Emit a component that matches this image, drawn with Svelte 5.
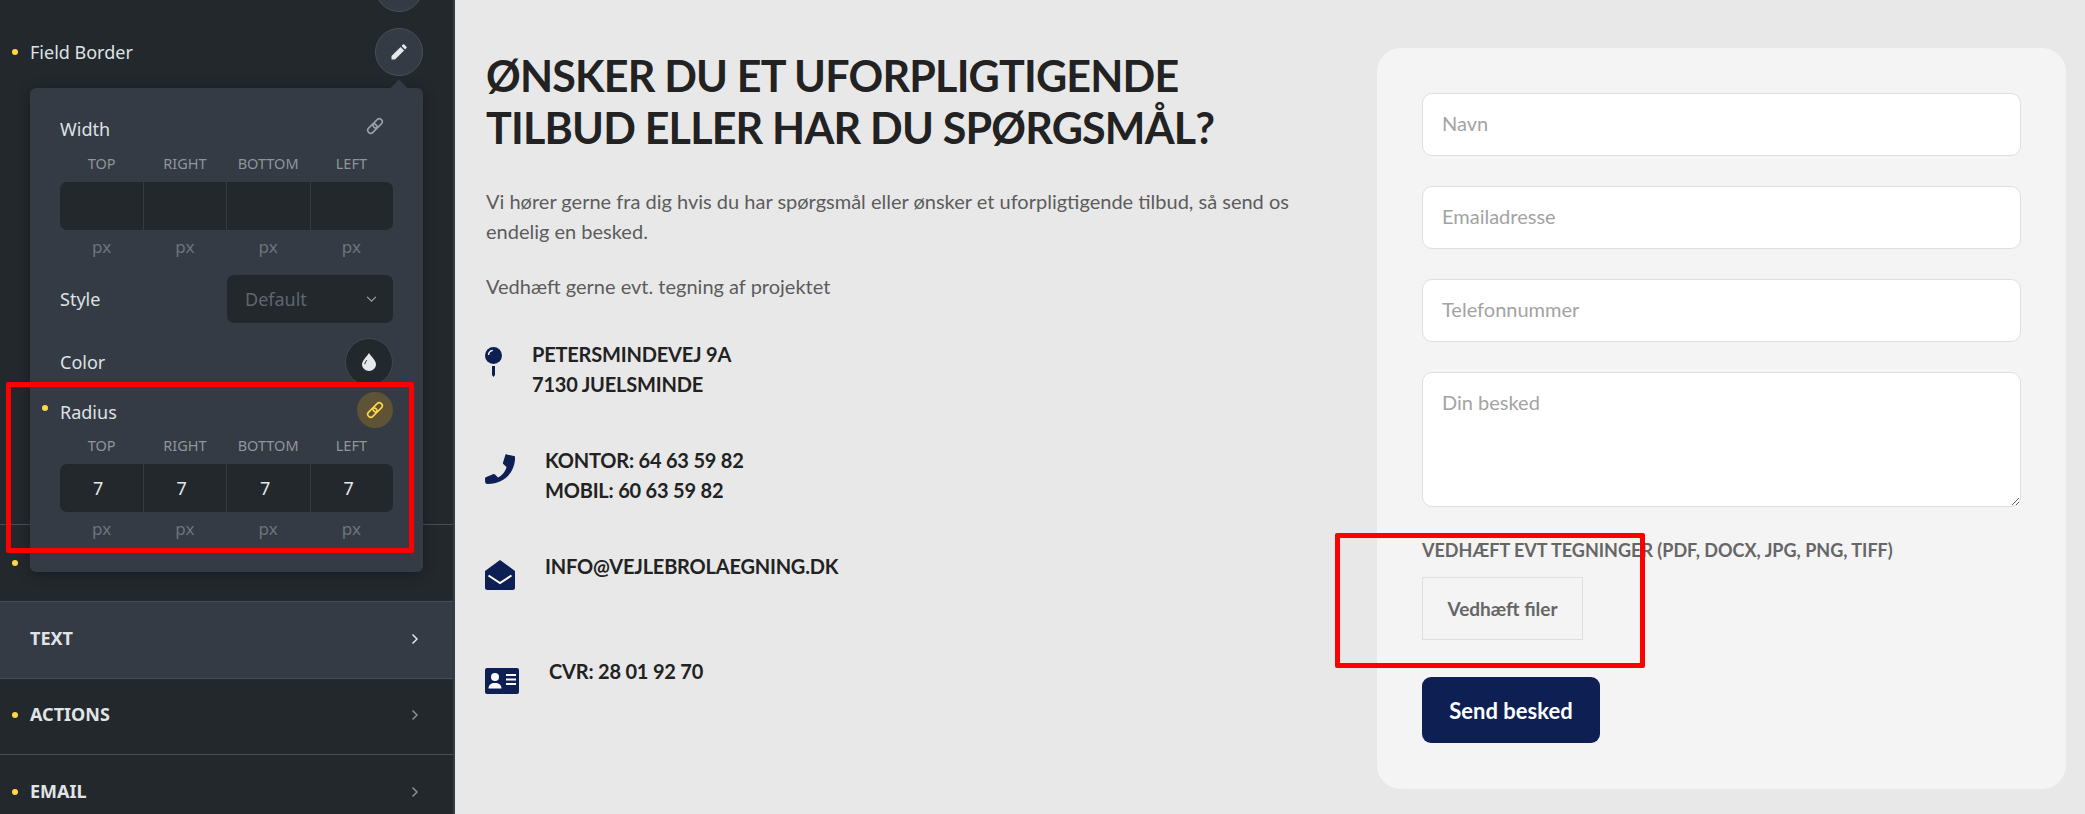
<script>
	const sides = ['TOP', 'RIGHT', 'BOTTOM', 'LEFT']
	const sections = [
		{ name: 'TEXT', active: true },
		{ name: 'ACTIONS', dot: true },
		{ name: 'EMAIL', dot: true }
	]
</script>

{#snippet link()}
	<svg class="link" viewBox="0 0 18 18" width="18" height="18" fill="none" stroke="currentColor" stroke-width="1.6">
		<g transform="rotate(-45 9 9)">
			<rect x="0" y="6" width="10.5" height="6" rx="3" />
			<rect x="7.5" y="6" width="10.5" height="6" rx="3" />
		</g>
	</svg>
{/snippet}

{#snippet sideValues(value)}
	<div class="side-labels">
		{#each sides as side}<span>{side}</span>{/each}
	</div>
	<div class="side-inputs">
		{#each sides as side}<div class="side-input">{value}</div>{/each}
	</div>
	<div class="side-units">
		{#each sides as side}<span>px</span>{/each}
	</div>
{/snippet}

{#snippet chevron()}
	<svg class="chevron" viewBox="0 0 8 12" width="8" height="12" fill="none" stroke="currentColor" stroke-width="1.5">
		<path d="M1.5 1.5 6 6l-4.5 4.5" />
	</svg>
{/snippet}

<div class="page">
	<aside class="sidebar">
		<div class="field-group">
			<div class="round-btn clipped"></div>
			<div class="field-row">
				<span class="dot"></span>
				<span class="field-name">Field Border</span>
				<div class="round-btn">
					<svg viewBox="0 0 16 16" width="16" height="16" fill="#e6e8ea">
						<path d="M0.5 15.5V12L9.6 2.9l3.5 3.5L4 15.5zM10.6 1.9 11.9.6a1 1 0 0 1 1.4 0l2.1 2.1a1 1 0 0 1 0 1.4l-1.3 1.3z" />
					</svg>
				</div>
			</div>
		</div>
		<div class="hidden-row"><span class="dot"></span></div>
		{#each sections as section}
			<div class="section" class:active={section.active}>
				{#if section.dot}<span class="dot"></span>{/if}
				<span>{section.name}</span>
				{@render chevron()}
			</div>
		{/each}
	</aside>

	<main class="main">
		<section class="info">
			<h1>ØNSKER DU ET UFORPLIGTIGENDE<br />TILBUD ELLER HAR DU SPØRGSMÅL?</h1>
			<p class="lead">Vi hører gerne fra dig hvis du har spørgsmål eller ønsker et uforpligtigende tilbud, så send os endelig en besked.</p>
			<p class="lead second">Vedhæft gerne evt. tegning af projektet</p>

			<div class="contact">
				<div class="contact-row">
					<svg class="pin" viewBox="0 0 17 30" width="17" height="30">
						<circle cx="8.5" cy="8.5" r="8.5" fill="#0e1f53" />
						<path d="M3.5 8C3.7 5.6 5.4 3.8 7.8 3.4" fill="none" stroke="#fff" stroke-width="1.4" />
						<path d="M7 19h3v9l-1.5 2L7 28z" fill="#0e1f53" />
					</svg>
					<div>PETERSMINDEVEJ 9A<br />7130 JUELSMINDE</div>
				</div>
				<div class="contact-row">
					<svg class="icon" viewBox="0 0 30 30" width="30" height="30">
						<path fill="#0e1f53" d="M21.5 0.5 29 2c1 .2 1.2 1 1.1 2C29.6 18 20 29.700 2.500 30 1 30 .4 29.200 .2 28L0 25c0-1 .4-1.600 1.300-2L8 20.200c.9-.4 1.500-.2 2 .4l3 2.900c4-1.800 7.500-6 8.500-10.500l-3-2.700c-.6-.5-.7-1.200-.4-2l2.100-6.800c.3-1 .900-1.600 1.800-1.400z" />
					</svg>
					<div>KONTOR: 64 63 59 82<br />MOBIL: 60 63 59 82</div>
				</div>
				<div class="contact-row">
					<svg class="icon" viewBox="0 0 30 30" width="30" height="30">
						<path fill="#0e1f53" d="M15 0 30 11v16.500a2.500 2.500 0 0 1-2.500 2.500h-25A2.500 2.500 0 0 1 0 27.500V11z" />
						<path d="M3.500 15.500 15 23l11.500-7.500" fill="none" stroke="#fff" stroke-width="2" />
					</svg>
					<div>INFO@VEJLEBROLAEGNING.DK</div>
				</div>
				<div class="contact-row">
					<svg class="icon card" viewBox="0 0 34 26" width="34" height="26">
						<rect width="34" height="26" rx="2" fill="#0e1f53" />
						<circle cx="10" cy="9" r="4" fill="#fff" />
						<path d="M3.500 20.500c0-3.500 2.500-5.500 6.500-5.500s6.500 2 6.500 5.500z" fill="#fff" />
						<path d="M21 7h10M21 11.500h10M21 16h10" stroke="#fff" stroke-width="1.800" />
					</svg>
					<div class="cvr">CVR: 28 01 92 70</div>
				</div>
			</div>
		</section>

		<form class="form" onsubmit={(e) => e.preventDefault()}>
			<input type="text" placeholder="Navn" />
			<input type="text" placeholder="Emailadresse" />
			<input type="text" placeholder="Telefonnummer" />
			<textarea placeholder="Din besked"></textarea>
			<div class="attach-label">VEDHÆFT EVT TEGNINGER (PDF, DOCX, JPG, PNG, TIFF)</div>
			<button type="button" class="attach">Vedhæft filer</button>
			<button type="submit" class="send">Send besked</button>
		</form>
	</main>

	<div class="popover">
		<div class="pop-head">
			<span class="width-label">Width</span>
			<span class="link-plain">{@render link()}</span>
		</div>
		{@render sideValues('')}

		<div class="pop-row style-row">
			<span>Style</span>
			<div class="select">
				<span>Default</span>
				<svg viewBox="0 0 12 8" width="11" height="7" fill="none" stroke="#9aa0a6" stroke-width="1.400"><path d="M1 1l5 5 5-5" /></svg>
			</div>
		</div>

		<div class="pop-row color-row">
			<span>Color</span>
			<div class="round-btn dark">
				<svg viewBox="0 0 14 18" width="14" height="18">
					<path d="M7 0C9 3.500 14 7.500 14 11.500A7 6.500 0 0 1 0 11.500C0 7.500 5 3.500 7 0z" fill="#e6e8ea" />
					<path d="M2.800 11.200C3 9.500 4 8 5 7" fill="none" stroke="#23282d" stroke-width="1" />
				</svg>
			</div>
		</div>

		<div class="pop-head radius-head">
			<span class="dot"></span>
			<span>Radius</span>
			<span class="link-active">{@render link()}</span>
		</div>
		{@render sideValues('7')}
	</div>

	<div class="mark mark-radius"></div>
	<div class="mark mark-files"></div>
</div>

<style>
	:global(body) {
		margin: 0;
		background: #e8e8e8;
	}

	.page {
		position: relative;
		display: flex;
		height: 814px;
		overflow: hidden;
		font-family: "Lato", sans-serif;
	}

	/* sidebar */
	.sidebar {
		flex: 0 0 455px;
		box-sizing: border-box;
		height: 814px;
		background: #23282d;
		border-right: 2px solid #343b44;
		color: #e6e8ea;
		font-family: "Noto Sans", sans-serif;
	}

	.field-group {
		height: 524px;
		box-sizing: border-box;
		padding-top: 1px;
	}

	.round-btn {
		display: flex;
		align-items: center;
		justify-content: center;
		box-sizing: border-box;
		width: 48px;
		height: 48px;
		border-radius: 50%;
		background: #343b44;
		border: 1px solid #47505a;
	}

	.clipped {
		margin: -37px 30px 0 auto;
	}

	.field-row {
		display: flex;
		align-items: center;
		position: relative;
		margin-top: 16px;
		padding: 0 30px;
		height: 48px;
		font-size: 18px;
	}

	.field-name {
		flex: 1;
		color: #dfe2e5;
	}

	.dot {
		position: absolute;
		left: 12px;
		width: 6px;
		height: 6px;
		border-radius: 50%;
		background: #ffd54a;
	}

	.hidden-row {
		position: relative;
		display: flex;
		align-items: center;
		box-sizing: border-box;
		height: 77px;
		border-top: 1px solid #464e58;
	}

	.section {
		position: relative;
		display: flex;
		align-items: center;
		justify-content: space-between;
		box-sizing: border-box;
		height: 76.5px;
		padding: 0 34px 2px 30px;
		border-top: 1px solid #464e58;
		font-size: 18px;
		font-weight: 700;
		color: #e1e4e7;
	}

	.section > span:not(.dot) {
		margin-top: -2px;
	}

	.section.active {
		background: #343b44;
	}

	.section:not(.active) .chevron {
		color: #868d94;
	}

	/* popover over the sidebar */
	.popover {
		position: absolute;
		left: 30px;
		top: 88px;
		box-sizing: border-box;
		width: 393px;
		height: 484px;
		padding: 26px 30px 0;
		background: #343b44;
		border-radius: 6px;
		box-shadow: 0 2px 14px rgba(0, 0, 0, 0.3);
		color: #dfe2e5;
		font-family: "Noto Sans", sans-serif;
		font-size: 18px;
	}

	.popover::before {
		content: "";
		position: absolute;
		right: 18px;
		top: -6px;
		width: 12px;
		height: 12px;
		background: #343b44;
		transform: rotate(45deg);
	}

	.pop-head,
	.pop-row {
		display: flex;
		align-items: center;
		justify-content: space-between;
		position: relative;
	}

	.pop-head {
		height: 28px;
	}

	.width-label {
		margin-top: 2px;
	}

	.link-plain {
		display: flex;
		margin-right: 9px;
		margin-top: -4px;
		color: #9aa0a6;
	}

	.radius-head {
		height: 36px;
		margin-top: 6px;
	}

	.radius-head > span:nth-child(2) {
		margin-top: 4px;
		margin-right: auto;
	}

	.radius-head .dot {
		left: -18px;
		top: 13px;
	}

	.link-active {
		display: flex;
		align-items: center;
		justify-content: center;
		width: 36px;
		height: 36px;
		border-radius: 50%;
		background: #5f5335;
		color: #ffd54a;
	}

	.side-labels,
	.side-inputs,
	.side-units {
		display: grid;
		grid-template-columns: repeat(4, 1fr);
		text-align: center;
	}

	.side-labels {
		margin-top: 13px;
		height: 16px;
		font-size: 14.5px;
		line-height: 16px;
		color: #8f959b;
	}

	.radius-head + .side-labels {
		margin-top: 9px;
	}

	.side-inputs {
		margin-top: 11px;
		height: 48px;
		gap: 1px;
		border-radius: 7px;
		overflow: hidden;
	}

	.side-input {
		background: #23282d;
		padding-right: 6px;
		line-height: 48px;
		color: #e6e8ea;
	}

	.side-units {
		margin-top: 8px;
		height: 18px;
		font-size: 17px;
		line-height: 18px;
		color: #6d747b;
	}

	.style-row {
		margin-top: 19px;
		height: 48px;
	}

	.select {
		display: flex;
		align-items: center;
		justify-content: space-between;
		box-sizing: border-box;
		width: 166px;
		height: 48px;
		padding: 0 16px 0 18px;
		background: #23282d;
		border-radius: 7px;
		color: #5f666d;
	}

	.color-row {
		margin-top: 15px;
		height: 48px;
	}

	.dark {
		background: #23282d;
		border-color: #3f4750;
	}

	/* page content */
	.main {
		flex: 1;
		display: flex;
		justify-content: space-between;
		padding: 0 19px 0 30px;
	}

	.info {
		padding-top: 50px;
		width: 830px;
	}

	h1 {
		margin: 0 0 0 1px;
		font-size: 43px;
		line-height: 52px;
		font-weight: 700;
		letter-spacing: -0.8px;
		color: #222;
		white-space: nowrap;
	}

	.lead {
		margin: 32px 0 0 1px;
		font-size: 20px;
		line-height: 30px;
		color: #5c5c5c;
	}

	.lead.second {
		margin-top: 25px;
	}

	.contact {
		margin-top: 38px;
		font-size: 20px;
		line-height: 30px;
		font-weight: 700;
		letter-spacing: -0.2px;
		color: #222;
	}

	.contact-row {
		display: flex;
		gap: 30px;
		height: 106px;
	}

	.cvr {
		margin-top: -1px;
	}

	.pin {
		margin-top: 8px;
	}

	.icon {
		margin-top: 9px;
	}

	.card {
		margin-top: 11px;
	}

	/* form */
	.form {
		box-sizing: border-box;
		display: flex;
		flex-direction: column;
		align-items: flex-start;
		width: 689px;
		height: 741px;
		margin-top: 48px;
		padding: 45px 45px 0;
		background: #f4f4f4;
		border-radius: 24px;
	}

	input,
	textarea {
		box-sizing: border-box;
		width: 100%;
		height: 63px;
		margin: 0 0 30px;
		padding: 0 19px 3px;
		background: #fff;
		border: 1px solid #dfdfdf;
		border-radius: 10px;
		font-family: "Lato", sans-serif;
		font-size: 20px;
		color: #333;
	}

	textarea {
		height: 135px;
		padding-top: 17px;
		margin-bottom: 31px;
	}

	input::placeholder,
	textarea::placeholder {
		color: #a3a3a3;
		opacity: 1;
	}

	.attach-label {
		height: 24px;
		font-size: 18px;
		line-height: 24px;
		font-weight: 700;
		color: #666;
		white-space: nowrap;
	}

	.attach {
		box-sizing: border-box;
		width: 161px;
		height: 63px;
		margin-top: 15px;
		background: transparent;
		border: 1px solid #dfdfdf;
		font-family: "Lato", sans-serif;
		font-size: 19px;
		font-weight: 700;
		color: #666;
	}

	.send {
		width: 178px;
		height: 66px;
		margin-top: 37px;
		background: #0e1f53;
		border: 0;
		border-radius: 9px;
		font-family: "Lato", sans-serif;
		font-size: 22px;
		font-weight: 700;
		color: #fff;
	}

	/* red annotation boxes */
	.mark {
		position: absolute;
		box-sizing: border-box;
		border: 5px solid #f00;
		border-radius: 2px;
		pointer-events: none;
	}

	.mark-radius {
		left: 6px;
		top: 382px;
		width: 408px;
		height: 171px;
	}

	.mark-files {
		left: 1335px;
		top: 533px;
		width: 310px;
		height: 135px;
	}
</style>
